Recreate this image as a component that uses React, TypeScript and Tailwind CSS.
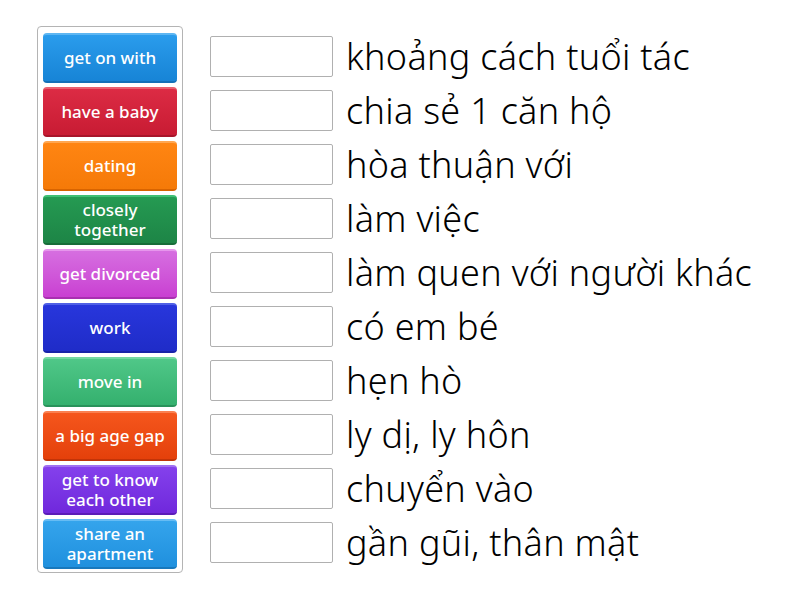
import React from "react";

const tiles: { label: string[]; cls: string }[] = [
  { label: ["get on with"], cls: "bg-gradient-to-b from-[#2a9cec] to-[#1784d6] border-t-[#5db6f2] border-b-[#1270b8]" },
  { label: ["have a baby"], cls: "bg-gradient-to-b from-[#dc2b44] to-[#c81b33] border-t-[#e8606f] border-b-[#a8142a]" },
  { label: ["dating"], cls: "bg-gradient-to-b from-[#ff8512] to-[#f57a08] border-t-[#ffa650] border-b-[#d86400]" },
  { label: ["closely", "together"], cls: "bg-gradient-to-b from-[#259a52] to-[#1d8546] border-t-[#3fc074] border-b-[#176d39]" },
  { label: ["get divorced"], cls: "bg-gradient-to-b from-[#d66ee0] to-[#c93fd2] border-t-[#e696ec] border-b-[#a830b0]" },
  { label: ["work"], cls: "bg-gradient-to-b from-[#2836dc] to-[#1f2cc8] border-t-[#5060e6] border-b-[#1822a8]" },
  { label: ["move in"], cls: "bg-gradient-to-b from-[#4fc788] to-[#34b06e] border-t-[#74d8a2] border-b-[#28925a]" },
  { label: ["a big age gap"], cls: "bg-gradient-to-b from-[#f5561c] to-[#e4400a] border-t-[#fa8050] border-b-[#c23408]" },
  { label: ["get to know", "each other"], cls: "bg-gradient-to-b from-[#8440ec] to-[#7028dc] border-t-[#a070f2] border-b-[#5a1cb8]" },
  { label: ["share an", "apartment"], cls: "bg-gradient-to-b from-[#34a4ec] to-[#1f90de] border-t-[#66bcf4] border-b-[#1878bc]" },
];

const defs = [
  "khoảng cách tuổi tác",
  "chia sẻ 1 căn hộ",
  "hòa thuận với",
  "làm việc",
  "làm quen với người khác",
  "có em bé",
  "hẹn hò",
  "ly dị, ly hôn",
  "chuyển vào",
  "gần gũi, thân mật",
];

export default function App() {
  return (
    <div className="w-[800px] h-[600px] bg-white flex" style={{ fontFamily: "'Noto Sans', 'Open Sans', sans-serif" }}>
      <div className="ml-[37px] mt-[26px] w-[146px] h-[547px] border border-[#b4b4b4] rounded-[4px] flex flex-col gap-[4px] pt-[6px] px-[5px]">
        {tiles.map((t, i) => (
          <div
            key={i}
            className={`h-[50px] rounded-[4px] border-t-2 border-b-2 flex flex-col items-center justify-center text-white text-[17px] leading-[20px] font-medium whitespace-nowrap ${t.cls}`}
          >
            {t.label.map((l, j) => (
              <span key={j}>{l}</span>
            ))}
          </div>
        ))}
      </div>
      <div className="ml-[27px] mt-[36px] flex flex-col gap-[13px]">
        {defs.map((d, i) => (
          <div key={i} className="h-[41px] flex items-center">
            <div className="w-[123px] h-[41px] border border-[#b0b0b0] rounded-[2px] bg-white shrink-0" />
            <span className="ml-[13px] text-[36px] leading-[41px] tracking-[0.3px] font-light text-black whitespace-nowrap">{d}</span>
          </div>
        ))}
      </div>
    </div>
  );
}
